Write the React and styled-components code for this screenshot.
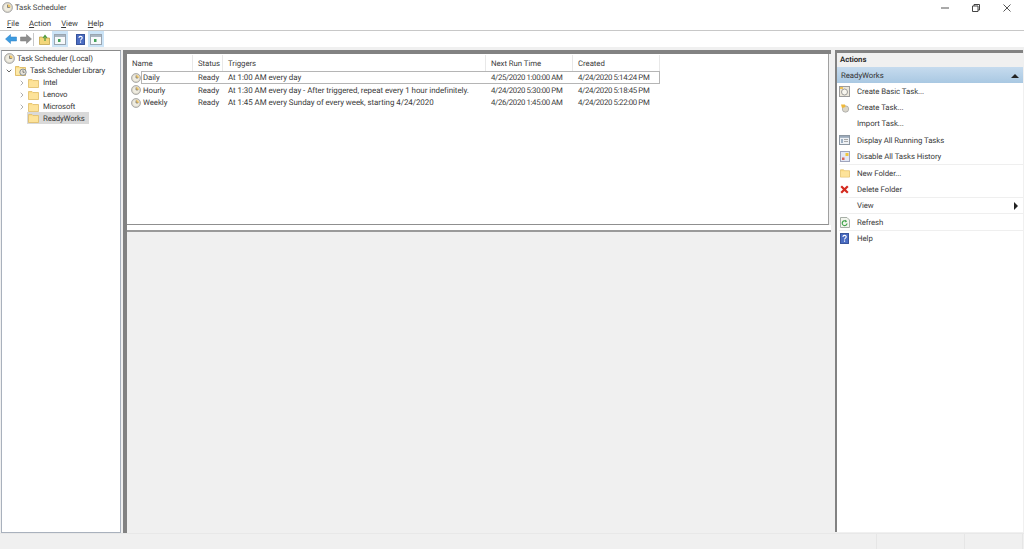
import React from 'react';
import styled, { createGlobalStyle } from 'styled-components';

const Global = createGlobalStyle`
  *, *::before, *::after { box-sizing: border-box; }
  html, body { margin: 0; padding: 0; background: #fff; overflow: hidden; }
  body {
    font-family: Roboto, "Open Sans", "Liberation Sans", sans-serif;
    font-size: 7.8px;
    letter-spacing: -0.05px;
    color: #3a3a3a;
    text-rendering: geometricPrecision;
  }
`;

const Window = styled.div`
  width: 1024px;
  height: 549px;
  display: flex;
  flex-direction: column;
  background: #f0f0f0;
`;

const TitleBar = styled.div`
  height: 15px;
  background: #fff;
  display: flex;
  align-items: center;
  padding-left: 2px;
  gap: 2px;
  font-size: 7.7px;
  color: #444;
`;

const WinButtons = styled.div`
  margin-left: auto;
  display: flex;
  padding-right: 2px;
`;

const WinButton = styled.div`
  width: 31px;
  height: 15px;
  display: flex;
  align-items: center;
  justify-content: center;
`;

const MenuBar = styled.div`
  height: 16px;
  background: #fff;
  display: flex;
  align-items: center;
  padding: 1px 0 0 7px;
  gap: 10px;
  border-bottom: 1px solid #c8c8c8;
  u { text-decoration-thickness: 1px; text-underline-offset: 1px; }
`;

const Toolbar = styled.div`
  height: 16px;
  background: #fff;
  display: flex;
  align-items: center;
  padding-left: 3px;
`;

const ToolBtn = styled.div`
  width: ${(p) => p.$w || 15}px;
  height: 16px;
  display: flex;
  align-items: center;
  justify-content: center;
  background: ${(p) => (p.$on ? '#cce4f7' : 'transparent')};
  margin-right: ${(p) => p.$gap || 0}px;
`;

const ToolSep = styled.div`
  width: 1px;
  height: 13px;
  background: #c8c8c8;
  margin-right: 3px;
`;

const Body = styled.div`
  flex: 1;
  min-height: 0;
  display: grid;
  grid-template-columns: 122px 708px 1fr;
  padding: 3px 1px 0 1px;
`;

const TreePanel = styled.div`
  background: #fff;
  border: 1px solid #a9b1bd;
  border-top-color: #8b8b8b;
  padding: 2px 0 0 1px;
  margin-right: 2px;
  letter-spacing: -0.15px;
`;

const TreeRow = styled.div`
  height: 11.9px;
  display: flex;
  align-items: center;
  white-space: nowrap;
  padding-left: ${(p) => p.$indent}px;
  gap: ${(p) => p.$gap || 2}px;
`;

const TreeItem = styled.div`
  display: flex;
  align-items: center;
  gap: 4px;
  height: 12px;
  width: 62px;
  padding-left: 1px;
  background: ${(p) => (p.$sel ? '#d9d9d9' : 'transparent')};
`;

const Caret = styled.span`
  width: 6px;
  display: flex;
  justify-content: center;
`;

const Center = styled.div`
  display: flex;
  flex-direction: column;
  border-left: 4px solid #828282;
  border-top: 4px solid #828282;
`;

const ListPane = styled.div`
  height: 171px;
  background: #fff;
  margin-right: 2px;
  border-right: 1px solid #a0a0a0;
  border-bottom: 1px solid #8f8f8f;
  padding-top: 1px;
`;

const cols = '66px 30px 263px 87px 87px';

const HeadRow = styled.div`
  display: grid;
  grid-template-columns: ${cols};
  width: 533px;
  height: 16px;
  color: #3c3c3c;
`;

const HeadCell = styled.div`
  height: 16px;
  line-height: 18px;
  padding-left: 5px;
  border-right: 1px solid #e8e8e8;
`;

const TaskRow = styled.div`
  display: grid;
  grid-template-columns: ${cols};
  width: 533px;
  height: 12.6px;
  padding-top: 1px;
  align-items: center;
  position: relative;
`;

const SelOutline = styled.div`
  position: absolute;
  left: 14px;
  right: 0;
  top: 0;
  bottom: -0.3px;
  border: 1px solid #b5b5b5;
  pointer-events: none;
`;

const Cell = styled.div`
  padding-left: 5px;
  white-space: nowrap;
  display: flex;
  align-items: center;
`;

const NameCell = styled(Cell)`
  padding-left: 4px;
  gap: 2px;
`;

const TriggerCell = styled(Cell)`
  font-size: 7.95px;
`;

const DateCell = styled(Cell)`
  letter-spacing: -0.35px;
`;

const Split = styled.div`
  height: 7px;
  background: #fff;
  border-bottom: 2px solid #9a9a9a;
`;

const DetailPane = styled.div`
  flex: 1;
  background: #f0f0f0;
`;

const ActionsPanel = styled.div`
  background: #fff;
  margin-left: 4px;
  margin-bottom: 1px;
  border-left: 2px solid #828282;
  border-top: 3px solid #828282;
`;

const ActionsHead = styled.div`
  height: 14px;
  line-height: 13px;
  background: #f0f0f0;
  padding-left: 3px;
  font-weight: 600;
  color: #222;
`;

const GroupHead = styled.div`
  height: 16px;
  display: flex;
  align-items: center;
  justify-content: space-between;
  padding: 1px 4px 0;
  background: linear-gradient(#c6dbee, #a9c8e2);
  color: #333;
`;

const ActionRow = styled.div`
  height: 16.4px;
  display: flex;
  align-items: center;
  margin-left: 2px;
  padding-top: 1px;
  gap: 7px;
  border-bottom: 1px solid ${(p) => (p.$line ? '#efefef' : 'transparent')};
`;

const ActionIcon = styled.span`
  width: 11px;
  height: 11px;
  display: flex;
  align-items: center;
  justify-content: center;
`;

const Arrow = styled.span`
  margin-left: auto;
  margin-right: 5px;
  width: 0;
  height: 0;
  border-left: 4px solid #222;
  border-top: 4px solid transparent;
  border-bottom: 4px solid transparent;
`;

const UpArrow = styled.span`
  width: 0;
  height: 0;
  border-left: 4px solid transparent;
  border-right: 4px solid transparent;
  border-bottom: 4px solid #222;
`;

const StatusBar = styled.div`
  height: 16px;
  display: grid;
  grid-template-columns: 877px 88px 58px 1fr;
  border-top: 1px solid #e8e8e8;
`;

const StatusCell = styled.div`
  border-right: 1px solid #e6e6e6;
`;

const FlipSvg = styled.svg`
  transform: ${(p) => (p.$flip ? 'scaleX(-1)' : 'none')};
`;

const Clock = ({ size = 10 }) => (
  <svg width={size} height={size} viewBox="0 0 12 12">
    <circle cx="6" cy="6" r="5.4" fill="#dcd8cc" stroke="#9a9a9a" strokeWidth=".9" />
    <circle cx="6" cy="6" r="3.7" fill="#efece0" />
    <path d="M6 2.5a3.5 3.5 0 0 1 3.5 3.5H6z" fill="#efc76c" />
    <path d="M6 3v3h2.5" fill="none" stroke="#777" strokeWidth=".9" />
  </svg>
);

const Folder = ({ w = 11, h = 10 }) => (
  <svg width={w} height={h} viewBox="0 0 11 10">
    <path d="M.5 1.5h3.5l1 1h5.5v7H.5z" fill="#fbdc84" stroke="#e0bd68" strokeWidth=".8" />
    <rect x="1" y="3.2" width="9" height="5.8" fill="#fde39a" />
  </svg>
);

const LibraryIcon = () => (
  <svg width="12" height="11" viewBox="0 0 12 11">
    <path d="M.5 1.5h3.5l1 1h5.5v8H.5z" fill="#fbdc84" stroke="#d9b358" strokeWidth=".8" />
    <rect x="1" y="3.2" width="9" height="6.5" fill="#fde9a9" />
    <circle cx="8" cy="7.2" r="3.2" fill="#e8e4d8" stroke="#6f7a85" strokeWidth=".8" />
    <path d="M8 5.3v2h1.6" fill="none" stroke="#555" strokeWidth=".7" />
  </svg>
);

const ChevronRight = () => (
  <svg width="4" height="6" viewBox="0 0 4 6">
    <path d="M.7.7 3 3 .7 5.3" fill="none" stroke="#a6a6a6" strokeWidth=".9" />
  </svg>
);

const ChevronDown = () => (
  <svg width="6" height="4" viewBox="0 0 6 4">
    <path d="M.7.7 3 3 5.3.7" fill="none" stroke="#555" strokeWidth=".9" />
  </svg>
);

const ArrowIcon = ({ color, edge, flip }) => (
  <FlipSvg $flip={flip} width="12" height="10" viewBox="0 0 12 10">
    <path d="M0.5 5 5.5.5v2.5H11.5v4H5.5v2.5z" fill={color} stroke={edge} strokeWidth=".5" />
  </FlipSvg>
);

const ConsoleIcon = () => (
  <svg width="12" height="11" viewBox="0 0 12 11">
    <rect x=".5" y=".5" width="11" height="10" fill="#f7f9fb" stroke="#9aa5b0" />
    <rect x="1" y="1" width="10" height="2" fill="#a9b6c2" />
    <rect x="4" y="5" width="2.5" height="3" fill="#46a35a" />
  </svg>
);

const HelpIcon = ({ w = 10, h = 12 }) => (
  <svg width={w} height={h} viewBox="0 0 10 12">
    <rect x=".5" y=".5" width="9" height="11" fill="#4a6cc2" stroke="#2d4a94" />
    <path d="M3.2 4.2C3.4 2 6.9 2 6.9 4.1 6.9 5.6 5 5.5 5 7.2" fill="none" stroke="#fff" strokeWidth="1.2" />
    <rect x="4.4" y="8.2" width="1.3" height="1.4" fill="#fff" />
  </svg>
);

const UpFolderIcon = () => (
  <svg width="11" height="11" viewBox="0 0 11 11">
    <path d="M.5 3h3l1 1h6v6.5H.5z" fill="#f3d67a" stroke="#b99a3c" strokeWidth=".7" />
    <path d="M6 7V2.5M4 4 6 1.5 8 4" fill="none" stroke="#4f9a3a" strokeWidth="1.2" />
  </svg>
);

const BasicTaskIcon = () => (
  <svg width="11" height="11" viewBox="0 0 11 11">
    <rect x=".5" y=".5" width="10" height="10" fill="#ece7da" stroke="#9c9c9c" />
    <circle cx="5.5" cy="6" r="3" fill="#f8f6ee" stroke="#888" strokeWidth=".8" />
    <rect x="1" y="1" width="3" height="2" fill="#eec25a" />
  </svg>
);

const CreateTaskIcon = () => (
  <svg width="10" height="10" viewBox="0 0 10 10">
    <circle cx="5.5" cy="6" r="3.2" fill="#d9d5c8" stroke="#a0a0a0" strokeWidth=".7" />
    <path d="M1 1.5 5 1.5 5.5 4 2 5z" fill="#f0b93a" />
  </svg>
);

const RunningIcon = () => (
  <svg width="11" height="10" viewBox="0 0 11 10">
    <rect x=".5" y=".5" width="10" height="9" fill="#eef1f5" stroke="#8d97a2" />
    <rect x="1" y="1" width="9" height="1.8" fill="#9aa9ba" />
    <rect x="2" y="4" width="2" height="4" fill="#9db0c4" />
    <rect x="5" y="4" width="4" height="1" fill="#a7a7a7" />
    <rect x="5" y="6" width="4" height="1" fill="#a7a7a7" />
  </svg>
);

const HistoryIcon = () => (
  <svg width="10" height="11" viewBox="0 0 10 11">
    <rect x=".5" y=".5" width="9" height="10" fill="#e4e7f4" stroke="#a0a5bd" />
    <rect x="2" y="6.5" width="2.5" height="2.5" fill="#d8675f" />
    <rect x="5.5" y="2" width="3" height="3" fill="#f0c63c" />
  </svg>
);

const DeleteIcon = () => (
  <svg width="9" height="9" viewBox="0 0 9 9">
    <path d="M1.2 1.2 7.8 7.8M7.8 1.2 1.2 7.8" stroke="#d42a1f" strokeWidth="2.2" />
  </svg>
);

const RefreshIcon = () => (
  <svg width="10" height="11" viewBox="0 0 10 11">
    <path d="M.5.5h6.5l2.5 2.5v7.5H.5z" fill="#f2f5ee" stroke="#a6aea6" />
    <path d="M7 6.5A2.4 2.4 0 1 1 6 4.2" fill="none" stroke="#3fa34a" strokeWidth="1.2" />
    <path d="M5 2.8 7.2 4.2 5.4 5.6z" fill="#3fa34a" />
  </svg>
);

const tasks = [
  ['Daily', 'At 1:00 AM every day', '4/25/2020 1:00:00 AM', '4/24/2020 5:14:24 PM'],
  ['Hourly', 'At 1:30 AM every day - After triggered, repeat every 1 hour indefinitely.', '4/24/2020 5:30:00 PM', '4/24/2020 5:18:45 PM'],
  ['Weekly', 'At 1:45 AM every Sunday of every week, starting 4/24/2020', '4/26/2020 1:45:00 AM', '4/24/2020 5:22:00 PM'],
];

const actions = [
  ['Create Basic Task...', <BasicTaskIcon />],
  ['Create Task...', <CreateTaskIcon />],
  ['Import Task...', null],
  ['Display All Running Tasks', <RunningIcon />],
  ['Disable All Tasks History', <HistoryIcon />, true],
  ['New Folder...', <Folder w={10} h={10} />],
  ['Delete Folder', <DeleteIcon />, true],
  ['View', null, true, true],
  ['Refresh', <RefreshIcon />, true],
  ['Help', <HelpIcon w={9} h={11} />],
];

export default function App() {
  return (
    <Window>
      <Global />
      <TitleBar>
        <Clock size={11} />
        <span>Task Scheduler</span>
        <WinButtons>
          <WinButton><svg width="8" height="8" viewBox="0 0 8 8"><path d="M0 4h8" stroke="#555" /></svg></WinButton>
          <WinButton><svg width="8" height="8" viewBox="0 0 8 8"><path d="M.5 2h5.5v5.5H.5zM2 2V.5h5.5V6H6" fill="none" stroke="#444" /></svg></WinButton>
          <WinButton><svg width="8" height="8" viewBox="0 0 8 8"><path d="M.5.5l7 7M7.5.5l-7 7" stroke="#555" /></svg></WinButton>
        </WinButtons>
      </TitleBar>
      <MenuBar>
        <span><u>F</u>ile</span>
        <span><u>A</u>ction</span>
        <span><u>V</u>iew</span>
        <span><u>H</u>elp</span>
      </MenuBar>
      <Toolbar>
        <ToolBtn><ArrowIcon color="#3c9be0" edge="#2a7fc4" /></ToolBtn>
        <ToolBtn><ArrowIcon color="#8e8e8e" edge="#7a7a7a" flip /></ToolBtn>
        <ToolSep />
        <ToolBtn><UpFolderIcon /></ToolBtn>
        <ToolBtn $on $w={16} $gap={5}><ConsoleIcon /></ToolBtn>
        <ToolBtn><HelpIcon w={9} h={11} /></ToolBtn>
        <ToolBtn $on $w={16}><ConsoleIcon /></ToolBtn>
      </Toolbar>
      <Body>
        <TreePanel>
          <TreeRow $indent={1}>
            <Clock size={11} />
            <span>Task Scheduler (Local)</span>
          </TreeRow>
          <TreeRow $indent={3} $gap={3}>
            <Caret><ChevronDown /></Caret>
            <LibraryIcon />
            <span>Task Scheduler Library</span>
          </TreeRow>
          {['Intel', 'Lenovo', 'Microsoft', 'ReadyWorks'].map((name) => (
            <TreeRow $indent={16} key={name}>
              <Caret>{name !== 'ReadyWorks' && <ChevronRight />}</Caret>
              <TreeItem $sel={name === 'ReadyWorks'}>
                <Folder />
                <span>{name}</span>
              </TreeItem>
            </TreeRow>
          ))}
        </TreePanel>
        <Center>
          <ListPane>
            <HeadRow>
              {['Name', 'Status', 'Triggers', 'Next Run Time', 'Created'].map((h) => (
                <HeadCell key={h}>{h}</HeadCell>
              ))}
            </HeadRow>
            {tasks.map(([name, trigger, next, created], i) => (
              <TaskRow key={name}>
                {i === 0 && <SelOutline />}
                <NameCell><Clock /><span>{name}</span></NameCell>
                <Cell>Ready</Cell>
                <TriggerCell>{trigger}</TriggerCell>
                <DateCell>{next}</DateCell>
                <DateCell>{created}</DateCell>
              </TaskRow>
            ))}
          </ListPane>
          <Split />
          <DetailPane />
        </Center>
        <ActionsPanel>
          <ActionsHead>Actions</ActionsHead>
          <GroupHead>
            <span>ReadyWorks</span>
            <UpArrow />
          </GroupHead>
          {actions.map(([label, icon, line, sub]) => (
            <ActionRow key={label} $line={line}>
              <ActionIcon>{icon}</ActionIcon>
              <span>{label}</span>
              {sub && <Arrow />}
            </ActionRow>
          ))}
        </ActionsPanel>
      </Body>
      <StatusBar>
        <StatusCell />
        <StatusCell />
        <StatusCell />
        <div />
      </StatusBar>
    </Window>
  );
}
